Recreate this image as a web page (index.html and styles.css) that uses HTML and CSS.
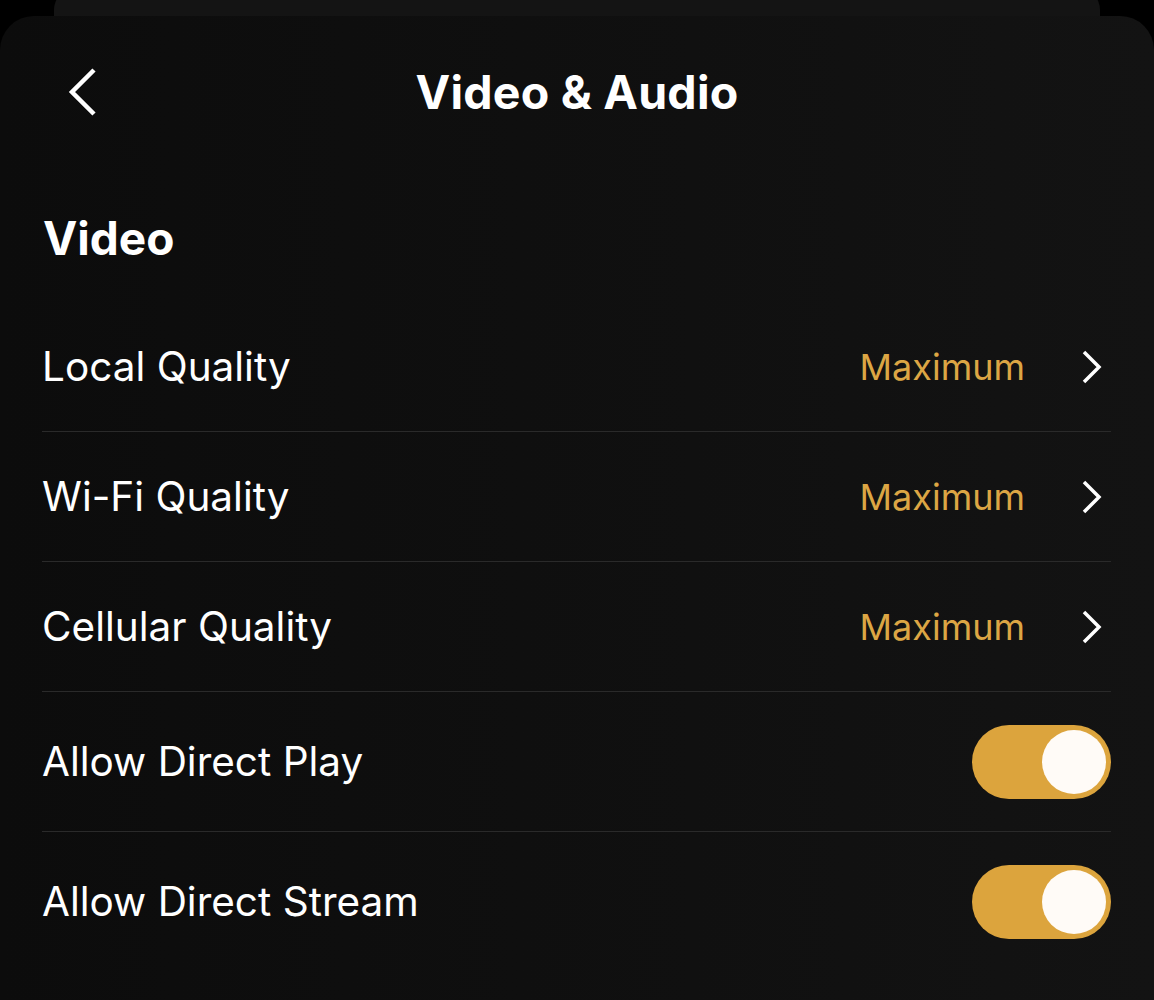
FILE: index.html
```html
<!DOCTYPE html>
<html lang="en">
<head>
<meta charset="utf-8">
<title>Video &amp; Audio</title>
<link rel="stylesheet" href="styles.css">
</head>
<body>
<div class="back-card"></div>
<main class="sheet">
  <header class="header">
    <button class="back" aria-label="Back">
      <svg width="32" height="50" viewBox="0 0 32 50"><path d="M28 3 L6 25 L28 47" fill="none" stroke="#fff" stroke-width="4.5" stroke-linecap="butt" stroke-linejoin="miter"/></svg>
    </button>
    <h1 class="title">Video &amp; Audio</h1>
    <span></span>
  </header>
  <h2 class="section">Video</h2>
  <ul class="list">
    <li class="row"><span class="label">Local Quality</span><span class="value">Maximum</span><svg class="chev" width="22" height="34" viewBox="0 0 22 34"><path d="M3 2 L18 17 L3 32" fill="none" stroke="#fff" stroke-width="3.5"/></svg></li>
    <li class="row"><span class="label">Wi-Fi Quality</span><span class="value">Maximum</span><svg class="chev" width="22" height="34" viewBox="0 0 22 34"><path d="M3 2 L18 17 L3 32" fill="none" stroke="#fff" stroke-width="3.5"/></svg></li>
    <li class="row"><span class="label">Cellular Quality</span><span class="value">Maximum</span><svg class="chev" width="22" height="34" viewBox="0 0 22 34"><path d="M3 2 L18 17 L3 32" fill="none" stroke="#fff" stroke-width="3.5"/></svg></li>
    <li class="row row-toggle"><span class="label">Allow Direct Play</span><span class="toggle"><span class="knob"></span></span></li>
    <li class="row row-toggle"><span class="label">Allow Direct Stream</span><span class="toggle"><span class="knob"></span></span></li>
  </ul>
</main>
</body>
</html>
```
FILE: styles.css
```css
html, body {
  margin: 0;
  padding: 0;
  background: #000;
  height: 100%;
  overflow: hidden;
}
body {
  font-family: Inter, "Liberation Sans", sans-serif;
  color: #fff;
}
.back-card {
  margin: -12px 54px 0;
  height: 28px;
  border-radius: 22px 22px 0 0;
  background: #141414;
}
.sheet {
  background: linear-gradient(90deg, #0c0c0c 0%, #101010 60%, #131313 100%);
  border-radius: 34px 34px 0 0;
  min-height: 984px;
}
.header {
  height: 152px;
  display: grid;
  grid-template-columns: 1fr auto 1fr;
  align-items: center;
  padding: 0 66px;
}
.back {
  background: none;
  border: 0;
  padding: 0;
  width: 34px;
  height: 50px;
  display: flex;
  align-items: center;
  justify-self: start;
}
.title {
  margin: 0;
  font-size: 46.5px;
  font-weight: 700;
  letter-spacing: 0.2px;
  line-height: 1;
}
.section {
  margin: 42px 0 36px 43px;
  font-size: 46px;
  font-weight: 700;
  line-height: 56px;
}
.list {
  list-style: none;
  margin: 0 43px 0 42px;
  padding: 0;
}
.row {
  height: 129px;
  border-bottom: 1px solid #2a2a2a;
  display: flex;
  align-items: center;
}
.row-toggle {
  height: 139px;
}
.row:last-child {
  border-bottom: 0;
}
.label {
  flex: 1;
  font-size: 40.5px;
  font-weight: 400;
}
.value {
  font-size: 36px;
  color: #dca644;
  margin-right: 56px;
}
.chev {
  margin-right: 8px;
}
.toggle {
  width: 139px;
  height: 74px;
  border-radius: 37px;
  background: #dca43d;
  display: flex;
  align-items: center;
  justify-content: flex-end;
  padding: 0 5px;
  box-sizing: border-box;
}
.knob {
  width: 64px;
  height: 64px;
  border-radius: 50%;
  background: #fffbf7;
}
```
